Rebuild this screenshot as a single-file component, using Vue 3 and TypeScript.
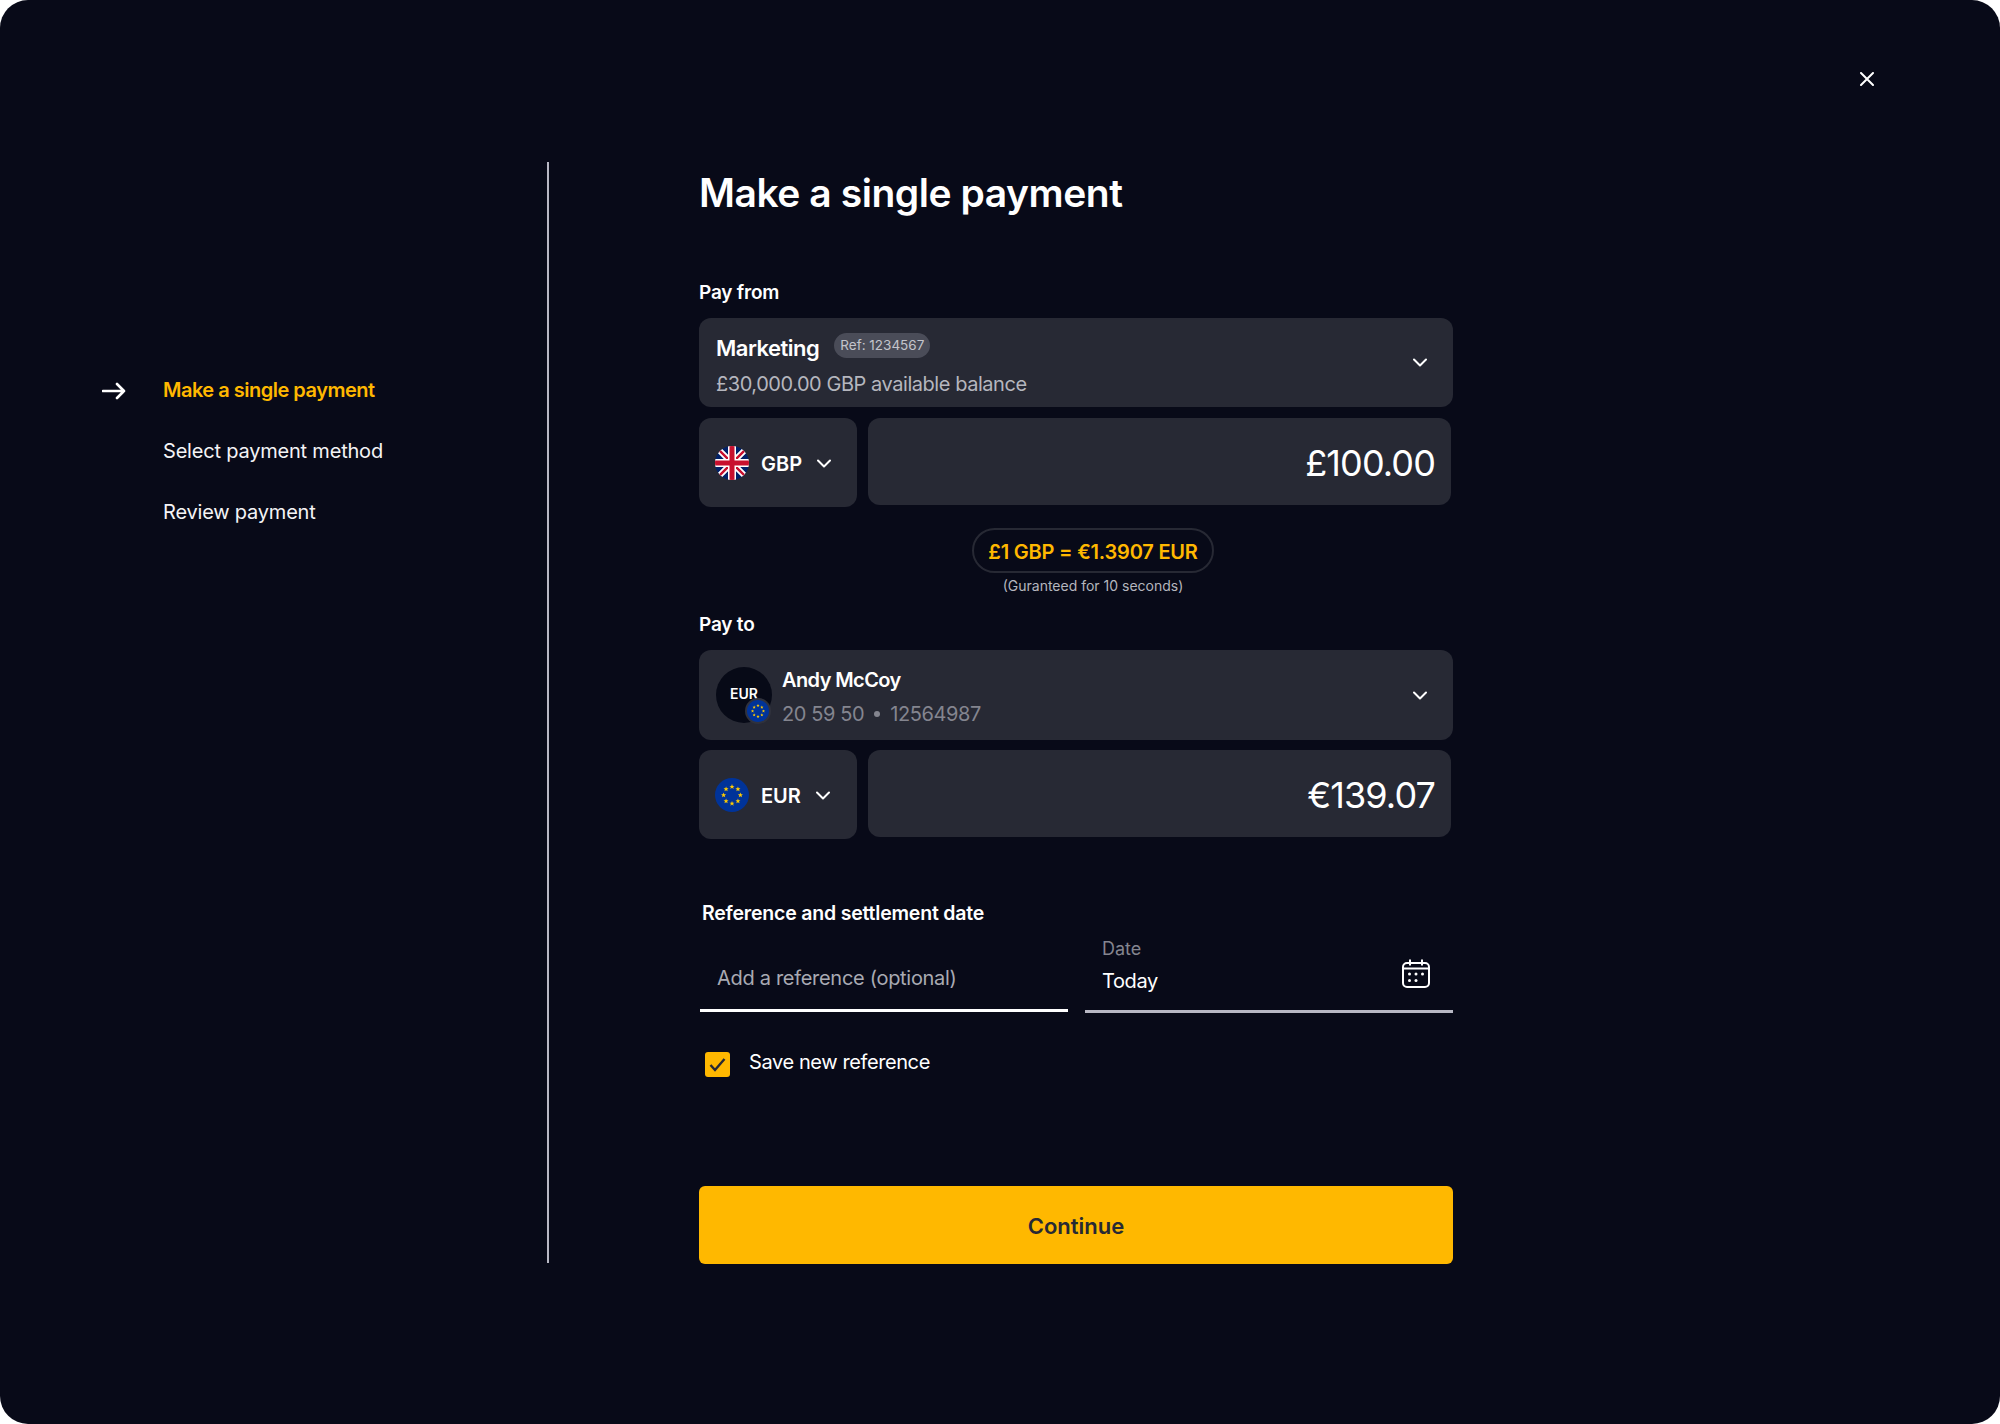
<script setup lang="ts">
// 左侧步骤列表，第一个是当前步骤
const steps = ["Make a single payment", "Select payment method", "Review payment"];

// 欧盟旗上的星星，按圆周排开（坐标相对 34x34 的画布）
const euStars = Array.from({ length: 8 }, (_, i) => {
  const angle = (i * Math.PI) / 4;
  return {
    x: (17 + 8.4 * Math.sin(angle)).toFixed(2),
    y: (17 - 8.4 * Math.cos(angle)).toFixed(2),
  };
});
const starPoints = "0,-2.5 0.7,-0.7 2.5,-0.7 1.1,0.4 1.6,2.3 0,1.2 -1.6,2.3 -1.1,0.4 -2.5,-0.7 -0.7,-0.7";
</script>

<template>
  <main class="modal">
    <button type="button" class="close" aria-label="Close">
      <svg width="14" height="14" viewBox="0 0 14 14" fill="none">
        <path d="M1 1l12 12M13 1L1 13" stroke="#fff" stroke-width="2" stroke-linecap="round" />
      </svg>
    </button>

    <aside class="steps">
      <ul>
        <li v-for="(step, i) in steps" :key="step" :class="{ active: i === 0 }">
          <svg v-if="i === 0" class="arrow" width="24" height="18" viewBox="0 0 24 18" fill="none">
            <path d="M1 9h21M15 2l7 7-7 7" stroke="#fff" stroke-width="2.6" stroke-linecap="round" stroke-linejoin="round" />
          </svg>
          {{ step }}
        </li>
      </ul>
    </aside>

    <section class="form">
      <h1>Make a single payment</h1>

      <h2 class="label pay-from">Pay from</h2>
      <div class="select account">
        <div class="select-body">
          <div class="account-top">
            <span class="account-name">Marketing</span>
            <span class="ref-pill">Ref: 1234567</span>
          </div>
          <div class="balance">£30,000.00 GBP available balance</div>
        </div>
        <svg class="chevron" width="14" height="9" viewBox="0 0 14 9" fill="none">
          <path d="M1 1.5l6 6 6-6" stroke="#fff" stroke-width="2" stroke-linecap="round" stroke-linejoin="round" />
        </svg>
      </div>
      <div class="amount-row">
        <div class="currency">
          <svg class="flag" width="34" height="34" viewBox="0 0 34 34">
            <clipPath id="uk-clip"><circle cx="17" cy="17" r="17" /></clipPath>
            <g clip-path="url(#uk-clip)">
              <rect width="34" height="34" fill="#012169" />
              <path d="M0 0l34 34M34 0L0 34" stroke="#fff" stroke-width="6" />
              <path d="M0 0l34 34M34 0L0 34" stroke="#c8102e" stroke-width="2.4" />
              <path d="M17 0v34M0 17h34" stroke="#fff" stroke-width="8" />
              <path d="M17 0v34M0 17h34" stroke="#c8102e" stroke-width="5" />
            </g>
          </svg>
          <span>GBP</span>
          <svg class="chevron" width="14" height="9" viewBox="0 0 14 9" fill="none">
            <path d="M1 1.5l6 6 6-6" stroke="#fff" stroke-width="2" stroke-linecap="round" stroke-linejoin="round" />
          </svg>
        </div>
        <div class="amount">£100.00</div>
      </div>

      <div class="rate">
        <div class="rate-pill">£1 GBP = €1.3907 EUR</div>
        <div class="rate-note">(Guranteed for 10 seconds)</div>
      </div>

      <h2 class="label pay-to">Pay to</h2>
      <div class="select payee">
        <div class="avatar">
          EUR
          <svg class="avatar-flag" width="26" height="26" viewBox="-3 -3 40 40">
            <circle cx="17" cy="17" r="20" fill="#30323d" />
            <circle cx="17" cy="17" r="17" fill="#003399" />
            <polygon v-for="(s, i) in euStars" :key="i" :points="starPoints" :transform="`translate(${s.x} ${s.y})`" fill="#ffcc00" />
          </svg>
        </div>
        <div class="select-body payee-body">
          <div class="payee-name">Andy McCoy</div>
          <div class="payee-bank">
            <span>20 59 50</span>
            <i class="dot"></i>
            <span>12564987</span>
          </div>
        </div>
        <svg class="chevron" width="14" height="9" viewBox="0 0 14 9" fill="none">
          <path d="M1 1.5l6 6 6-6" stroke="#fff" stroke-width="2" stroke-linecap="round" stroke-linejoin="round" />
        </svg>
      </div>
      <div class="amount-row">
        <div class="currency">
          <svg class="flag" width="34" height="34" viewBox="0 0 34 34">
            <circle cx="17" cy="17" r="17" fill="#003399" />
            <polygon v-for="(s, i) in euStars" :key="i" :points="starPoints" :transform="`translate(${s.x} ${s.y})`" fill="#ffcc00" />
          </svg>
          <span>EUR</span>
          <svg class="chevron" width="14" height="9" viewBox="0 0 14 9" fill="none">
            <path d="M1 1.5l6 6 6-6" stroke="#fff" stroke-width="2" stroke-linecap="round" stroke-linejoin="round" />
          </svg>
        </div>
        <div class="amount">€139.07</div>
      </div>

      <h2 class="label ref-title">Reference and settlement date</h2>
      <div class="fields">
        <div class="field ref-field">Add a reference (optional)</div>
        <div class="field date-field">
          <div>
            <div class="date-label">Date</div>
            <div class="date-value">Today</div>
          </div>
          <svg class="calendar" width="28" height="29" viewBox="0 0 28 29" fill="none">
            <rect x="1" y="4" width="26" height="24" rx="4" stroke="#fff" stroke-width="2" />
            <path d="M8 0.5v6M20 0.5v6M1 9.5h26" stroke="#fff" stroke-width="2" />
            <circle cx="7.5" cy="15" r="1.5" fill="#fff" />
            <circle cx="14" cy="15" r="1.5" fill="#fff" />
            <circle cx="20.5" cy="15" r="1.5" fill="#fff" />
            <circle cx="7.5" cy="21.5" r="1.5" fill="#fff" />
            <circle cx="14" cy="21.5" r="1.5" fill="#fff" />
          </svg>
        </div>
      </div>

      <label class="save">
        <span class="checkbox">
          <svg width="17" height="14" viewBox="0 0 17 14" fill="none">
            <path d="M1.5 7l4.5 5 9.5-11" stroke="#272934" stroke-width="2.4" />
          </svg>
        </span>
        Save new reference
      </label>

      <button type="button" class="continue">Continue</button>
    </section>
  </main>
</template>

<style>
html,
body {
  background: #fff;
}
</style>

<style scoped>
.modal {
  position: relative;
  box-sizing: border-box;
  width: 2000px;
  height: 1424px;
  padding-top: 162px;
  display: flex;
  align-items: flex-start;
  border-radius: 28px;
  background: #080a18;
  color: #fff;
  font-family: Inter, "Liberation Sans", sans-serif;
}

.close {
  position: absolute;
  top: 72px;
  left: 1860px;
  width: 14px;
  height: 14px;
  padding: 0;
  border: none;
  background: none;
  display: flex;
}

.steps {
  box-sizing: border-box;
  width: 549px;
  height: 1101px;
  padding: 213px 0 0 163px;
  border-right: 2px solid #b8b8c4;
}

.steps ul {
  margin: 0;
  padding: 0;
  list-style: none;
  display: flex;
  flex-direction: column;
  gap: 31px;
}

.steps li {
  position: relative;
  font-size: 20px;
  line-height: 30px;
  letter-spacing: -0.2px;
  color: #f4f4f6;
}

.steps li.active {
  font-weight: 600;
  letter-spacing: -0.5px;
  color: #ffb800;
}

.arrow {
  position: absolute;
  left: -61px;
  top: 7px;
}

.form {
  width: 754px;
  margin-left: 150px;
  display: flex;
  flex-direction: column;
}

h1 {
  margin: 0;
  font-size: 39px;
  line-height: 62px;
  font-weight: 600;
  letter-spacing: -0.45px;
}

.label {
  margin: 0;
  font-size: 19px;
  line-height: 24px;
  font-weight: 600;
  letter-spacing: -0.2px;
}

.pay-from {
  margin-top: 57px;
  margin-bottom: 13px;
}

.pay-to {
  margin-top: 18px;
  margin-bottom: 13px;
}

.ref-title {
  margin-top: 62px;
  margin-left: 3px;
  margin-bottom: 1px;
  font-size: 19.5px;
}

.select {
  box-sizing: border-box;
  display: flex;
  align-items: center;
  padding: 0 26px 0 17px;
  border-radius: 12px;
  background: #272934;
}

.select-body {
  flex: 1;
}

.account {
  height: 89px;
}

.account-top {
  display: flex;
  align-items: center;
  gap: 15px;
  margin-top: 1.5px;
  height: 30px;
}

.account-name {
  margin-top: 5px;
  font-size: 22px;
  font-weight: 600;
  letter-spacing: -0.5px;
}

.ref-pill {
  height: 25px;
  padding: 0 6px;
  border-radius: 13px;
  background: #4a4c58;
  color: #c4c5cc;
  font-size: 13.5px;
  line-height: 25px;
}

.balance {
  margin-top: 10.5px;
  font-size: 20px;
  line-height: 26px;
  color: #b5b6be;
  letter-spacing: -0.45px;
}

.payee {
  height: 90px;
  gap: 10px;
}

.avatar {
  position: relative;
  width: 56px;
  height: 56px;
  padding-bottom: 3px;
  box-sizing: border-box;
  display: flex;
  align-items: center;
  justify-content: center;
  border-radius: 50%;
  background: #070a17;
  font-size: 14px;
  font-weight: 600;
}

.avatar-flag {
  position: absolute;
  right: 1px;
  bottom: -1px;
}

.payee-body {
  margin-top: 4px;
}

.payee-name {
  font-size: 20px;
  line-height: 28px;
  font-weight: 600;
  letter-spacing: -0.6px;
}

.payee-bank {
  margin-top: 6px;
  display: flex;
  align-items: center;
  gap: 10px;
  font-size: 20px;
  line-height: 28px;
  letter-spacing: -0.4px;
  color: #84858f;
}

.dot {
  width: 6px;
  height: 6px;
  border-radius: 50%;
  background: #84858f;
}

.amount-row {
  margin-top: 11px;
  display: flex;
  gap: 11px;
  align-items: flex-start;
}

.payee + .amount-row {
  margin-top: 10px;
}

.currency {
  box-sizing: border-box;
  width: 158px;
  height: 89px;
  padding-left: 16px;
  display: flex;
  align-items: center;
  border-radius: 12px;
  background: #272934;
  font-size: 20px;
  font-weight: 600;
}

.currency span {
  margin-top: 3px;
}

.flag {
  margin-right: 12px;
}

.currency .chevron {
  margin-left: 15px;
  margin-top: 2px;
}

.amount {
  box-sizing: border-box;
  width: 583px;
  height: 87px;
  padding-right: 16px;
  border-radius: 12px;
  background: #272934;
  font-size: 36px;
  line-height: 90px;
  letter-spacing: -0.9px;
  text-align: right;
}

.rate {
  margin-top: 21px;
  padding-left: 34px;
  display: flex;
  flex-direction: column;
  align-items: center;
}

.rate-pill {
  box-sizing: border-box;
  width: 242px;
  height: 45px;
  border: 2px solid #272934;
  border-radius: 23px;
  color: #ffb800;
  font-size: 20px;
  font-weight: 600;
  line-height: 44px;
  text-align: center;
  letter-spacing: -0.2px;
}

.rate-note {
  margin-top: 4px;
  font-size: 14px;
  line-height: 18px;
  color: #b5b6be;
}

.fields {
  margin-top: 5px;
  margin-left: 1px;
  display: grid;
  grid-template-columns: 368px 368px;
  gap: 17px;
}

.field {
  box-sizing: border-box;
  height: 82px;
  border-bottom: 3px solid #fff;
}

.ref-field {
  height: 81px;
  padding: 33px 0 0 17px;
  font-size: 20px;
  line-height: 28px;
  letter-spacing: -0.3px;
  color: #a9aab3;
}

.date-field {
  padding: 0 23px 0 17px;
  border-bottom-color: #b8b8c4;
  display: flex;
  justify-content: space-between;
}

.date-label {
  margin-top: 6px;
  font-size: 18px;
  line-height: 24px;
  color: #84858f;
}

.date-value {
  margin-top: 6px;
  font-size: 20px;
  line-height: 28px;
  letter-spacing: -0.4px;
}

.calendar {
  margin-top: 28px;
}

.save {
  margin-top: 36px;
  margin-left: 6px;
  display: flex;
  align-items: flex-start;
  gap: 19px;
  font-size: 20px;
  line-height: 26px;
  letter-spacing: -0.4px;
}

.checkbox {
  width: 25px;
  height: 25px;
  margin-top: 3px;
  display: flex;
  align-items: center;
  justify-content: center;
  border-radius: 3px;
  background: #ffb800;
}

.continue {
  height: 78px;
  margin-top: 109px;
  padding-top: 3px;
  border: none;
  border-radius: 6px;
  background: #ffb800;
  color: #272934;
  font-family: inherit;
  font-size: 22px;
  font-weight: 600;
  cursor: pointer;
}
</style>
